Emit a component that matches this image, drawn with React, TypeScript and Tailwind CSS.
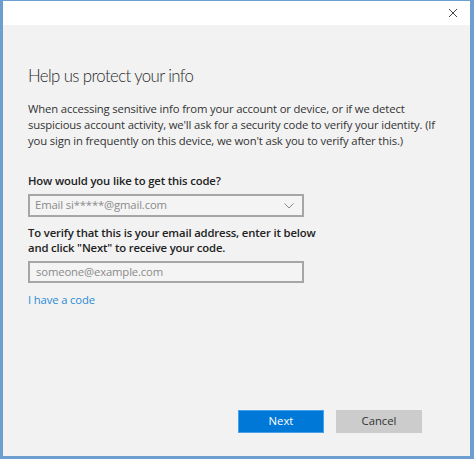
import React from "react";

export default function App() {
  const font = { fontFamily: '"Open Sans", "Noto Sans", sans-serif' };
  return (
    <div
      className="w-[474px] h-[459px] bg-[#6d9ed0] p-[1px] pl-[3px] pr-[4px] pb-[3px] overflow-hidden"
      style={font}
    >
      <div className="flex flex-col h-full bg-[#f2f2f2]">
        <div className="h-[24px] bg-white flex items-center justify-end pr-[12px] shrink-0">
          <svg width="10" height="10" viewBox="0 0 10 10" className="text-[#444]">
            <path d="M1 1L9 9M9 1L1 9" stroke="currentColor" strokeWidth="1" />
          </svg>
        </div>
        <div className="flex flex-col flex-1 pl-[25px] pr-[30px]">
          <h1 className="mt-[38px] text-[16.8px] font-light text-[#2b2b2b] leading-[26px] tracking-[-0.6px] font-['Lato',sans-serif]">
            Help us protect your info
          </h1>
          <p className="mt-[12px] text-[11.3px] leading-[16px] text-[#333] tracking-[-0.15px]">
            When accessing sensitive info from your account or device, or if we detect suspicious account activity, we'll ask for a security code to verify your identity. (If you sign in frequently on this device, we won't ask you to verify after this.)
          </p>
          <div className="mt-[24px] text-[11.3px] leading-[16px] font-semibold text-[#222] tracking-[-0.15px]">
            How would you like to get this code?
          </div>
          <div className="mt-[5px] w-[276px] h-[23px] border-2 border-[#a6a6a6] bg-[#f4f4f4] flex items-center justify-between pl-[5px] pr-[8px]">
            <span className="text-[11.3px] text-[#8a8a8a] tracking-[-0.15px]">Email si*****@gmail.com</span>
            <svg width="10" height="6" viewBox="0 0 10 6">
              <path d="M0.5 0.5L5 5L9.5 0.5" fill="none" stroke="#888" strokeWidth="1" />
            </svg>
          </div>
          <div className="mt-[8px] text-[11.3px] leading-[15px] font-semibold text-[#222] tracking-[-0.15px] w-[290px]">
            To verify that this is your email address, enter it below and click "Next" to receive your code.
          </div>
          <div className="mt-[6px] w-[276px] h-[22px] border-2 border-[#a6a6a6] bg-[#f4f4f4] flex items-center pl-[6px]">
            <span className="text-[11.3px] text-[#8a8a8a] tracking-[-0.15px]">someone@example.com</span>
          </div>
          <div className="mt-[9px] text-[11.3px] leading-[16px] text-[#2d8ad6] tracking-[-0.15px]">
            I have a code
          </div>
          <div className="flex-1" />
          <div className="flex justify-end gap-[12px] pr-[18px] mb-[23px]">
            <button className="w-[86px] h-[23px] bg-[#0078d7] border border-[#4aa0e6] text-white text-[11.3px]">
              Next
            </button>
            <button className="w-[86px] h-[23px] bg-[#cccccc] text-[#333] text-[11.3px]">
              Cancel
            </button>
          </div>
        </div>
      </div>
    </div>
  );
}
